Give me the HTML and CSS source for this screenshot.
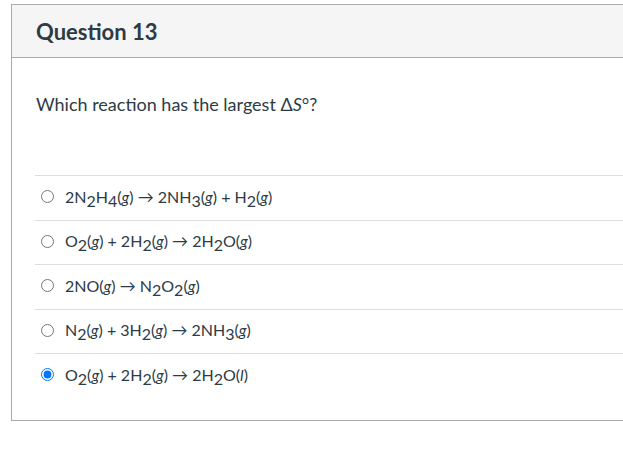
FILE: index.html
```html
<!DOCTYPE html>
<html>
<head>
<meta charset="utf-8">
<link rel="stylesheet" href="styles.css">
</head>
<body>
<div class="question">
  <div class="q-header"><h2 class="q-title">Question 13</h2></div>
  <div class="q-body">
    <p class="q-text">Which reaction has the largest Δ<i>S</i>°?</p>
    <div class="answers">
      <label class="answer"><input type="radio" name="q13" class="radio"><span class="atext">2N<sub>2</sub>H<sub>4</sub>(<i>g</i>) → 2NH<sub>3</sub>(<i>g</i>) + H<sub>2</sub>(<i>g</i>)</span></label>
      <label class="answer"><input type="radio" name="q13" class="radio"><span class="atext">O<sub>2</sub>(<i>g</i>) + 2H<sub>2</sub>(<i>g</i>) → 2H<sub>2</sub>O(<i>g</i>)</span></label>
      <label class="answer"><input type="radio" name="q13" class="radio"><span class="atext">2NO(<i>g</i>) → N<sub>2</sub>O<sub>2</sub>(<i>g</i>)</span></label>
      <label class="answer"><input type="radio" name="q13" class="radio"><span class="atext">N<sub>2</sub>(<i>g</i>) + 3H<sub>2</sub>(<i>g</i>) → 2NH<sub>3</sub>(<i>g</i>)</span></label>
      <label class="answer"><input type="radio" name="q13" class="radio" checked><span class="atext">O<sub>2</sub>(<i>g</i>) + 2H<sub>2</sub>(<i>g</i>) → 2H<sub>2</sub>O(<i>l</i>)</span></label>
    </div>
  </div>
</div>
</body>
</html>
```
FILE: styles.css
```css
html, body {
  margin: 0;
  padding: 0;
  background: #fff;
  overflow: hidden;
}
body {
  font-family: Lato, "Open Sans", "Liberation Sans", sans-serif;
  color: #2d3b45;
  padding: 4px 0 0 11px;
}
.question {
  border: 1px solid #aaaaaa;
  border-right: 0;
}
.q-header {
  background: #f5f5f5;
  border-bottom: 1px solid #aaaaaa;
  height: 52px;
  display: flex;
  align-items: center;
  padding-left: 24px;
}
.q-title {
  margin: 0;
  font-size: 22px;
  font-weight: 700;
  color: #2d3b45;
}
.q-body {
  padding: 35px 0 22px 0;
}
.q-text {
  margin: 0 0 60px 24px;
  font-size: 18px;
  line-height: 22px;
}
.answers {
  margin-left: 23px;
}
.answer {
  box-sizing: border-box;
  height: 44.5px;
  border-top: 1px solid #dddddd;
  display: flex;
  align-items: center;
  padding-left: 6px;
  padding-bottom: 2px;
  font-size: 16px;
}
.radio {
  width: 13px;
  height: 13px;
  margin: 0 11px 0 0;
  flex: none;
}
.atext {
  line-height: 20px;
}
.atext sub {
  font-size: 16px;
  vertical-align: -4px;
  line-height: 0;
}
```
